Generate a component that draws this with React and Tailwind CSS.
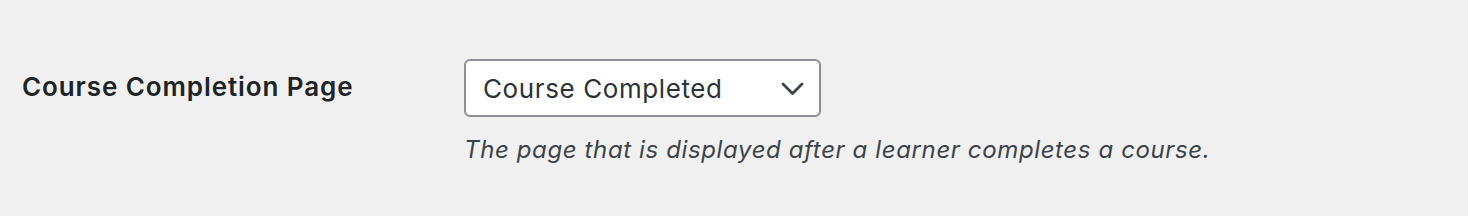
export default function App() {
  return (
    <div
      className="min-h-[216px] w-full bg-[#f0f0f1] text-[#1d2327]"
      style={{ fontFamily: 'Inter, "Noto Sans", sans-serif' }}
    >
      <div className="flex pl-[22px] pt-[59px]">
        <div className="w-[442px] shrink-0 pt-[12px]">
          <label className="text-[26px] font-semibold leading-[32px] tracking-[0.9px]">Course Completion Page</label>
        </div>
        <div>
          <div className="flex h-[58px] w-[357px] items-center justify-between rounded-[6px] border-2 border-[#8c8f94] bg-white pl-[17px] pr-[15px]">
            <span className="mt-[2px] text-[26px] leading-[32px] tracking-[0.6px] text-[#2c3338]">Course Completed</span>
            <svg width="23" height="13" viewBox="0 0 23 13" fill="none" stroke="#3c434a" strokeWidth="2.8" strokeLinecap="round" strokeLinejoin="round">
              <path d="M2 2l9.5 9.5 9.5-9.5" />
            </svg>
          </div>
          <p className="mt-[17px] text-[24px] italic leading-[32px] tracking-[0.62px] text-[#3c434a]">
            The page that is displayed after a learner completes a course.
          </p>
        </div>
      </div>
    </div>
  );
}
